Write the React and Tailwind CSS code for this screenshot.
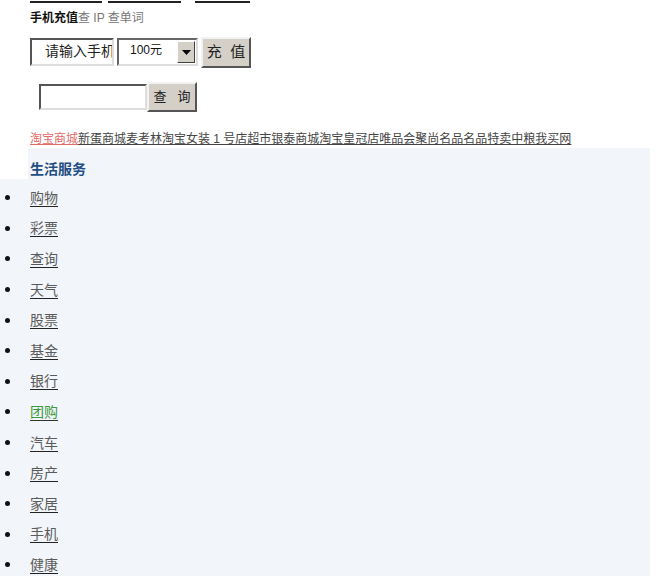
import React from "react";

const services = ["购物", "彩票", "查询", "天气", "股票", "基金", "银行", "团购", "汽车", "房产", "家居", "手机", "健康"];

export default function App() {
  return (
    <div className="w-[657px] h-[576px] overflow-hidden bg-white text-[#333]" style={{ fontFamily: '"Liberation Sans", "Noto Sans CJK SC", sans-serif' }}>
      {/* cut-off link underlines at the top */}
      <div className="flex h-[3px] pl-[30px]">
        <span className="w-[72px] h-[2px] mt-[1px] bg-[#222]" />
        <span className="w-[73px] h-[2px] mt-[1px] ml-[6px] bg-[#222]" />
        <span className="w-[55px] h-[2px] mt-[1px] ml-[14px] bg-[#222]" />
      </div>

      <div className="pl-[30px] mt-[7px] h-[16px] text-[12px] leading-[16px]">
        <span className="font-bold text-[#111]">手机充值</span>
        <span className="text-[#777]">查 IP 查单词</span>
      </div>

      {/* recharge row */}
      <div className="flex items-center pl-[30px] mt-[10px] h-[32px]">
        <div className="w-[84px] h-[28px] border-2 border-t-[#555] border-l-[#555] border-b-[#ddd] border-r-[#ddd] bg-white text-[14px] leading-[22px] pl-[13px] text-[#222] overflow-hidden whitespace-nowrap">
          请输入手机
        </div>
        <div className="ml-[3px] w-[81px] h-[28px] border-2 border-t-[#666] border-l-[#666] border-b-[#ddd] border-r-[#ddd] bg-white flex items-center">
          <span className="flex-1 pl-[11px] text-[12px] text-[#111] -mt-[4px]">100元</span>
          <span className="w-[18px] h-[22px] mr-[1px] bg-[#d4d0c8] border border-t-white border-l-white border-b-[#404040] border-r-[#404040] flex items-center justify-center">
            <svg width="9" height="5" viewBox="0 0 9 5"><path d="M0 0h9L4.5 5z" fill="#000" /></svg>
          </span>
        </div>
        <button className="ml-[3px] w-[50px] h-[31px] p-0 bg-[#d4d0c8] border-2 border-t-[#f2f2f2] border-l-[#f2f2f2] border-b-[#555] border-r-[#555] text-[15px] leading-[20px] text-[#222] whitespace-pre">
          {"充  值"}
        </button>
      </div>

      {/* query row */}
      <div className="flex items-center pl-[39px] mt-[14px] h-[30px]">
        <div className="w-[108px] h-[26px] border-2 border-t-[#555] border-l-[#555] border-b-[#ddd] border-r-[#ddd] bg-white" />
        <button className="w-[50px] h-[30px] p-0 bg-[#d4d0c8] border-2 border-t-[#f2f2f2] border-l-[#f2f2f2] border-b-[#555] border-r-[#555] text-[13px] leading-[18px] text-[#222] whitespace-pre">
          {"查   询"}
        </button>
      </div>

      {/* shop links */}
      <div className="pl-[30px] mt-[19px] h-[17px] text-[12px] leading-[16px] whitespace-nowrap">
        <a className="text-[#e46a6a] underline decoration-[#e46a6a]">淘宝商城</a>
        <a className="text-[#444] underline">新蛋商城麦考林淘宝女装 1 号店超市银泰商城淘宝皇冠店唯品会聚尚名品名品特卖中粮我买网</a>
      </div>

      {/* services */}
      <div className="ml-[28px] w-[622px] h-[31px] bg-[#f2f5f9] pl-[2px] pt-[12px] text-[14px] leading-[18px] font-bold text-[#1f4e85]">
        生活服务
      </div>
      <ul className="w-[650px] bg-[#f2f5f9] pt-[2px]">
        {services.map((s) => (
          <li key={s} className="flex items-center h-[30.6px] pt-[3px]">
            <span className="w-[30px] flex justify-start pl-[5px]">
              <span className="w-[5px] h-[5px] rounded-full bg-[#111]" />
            </span>
            <a className={`text-[14px] leading-[20px] underline underline-offset-[3px] ${s === "团购" ? "text-[#3c9a3c] decoration-[#333]" : "text-[#5a5a5a] decoration-[#222]"}`}>{s}</a>
          </li>
        ))}
      </ul>
    </div>
  );
}
